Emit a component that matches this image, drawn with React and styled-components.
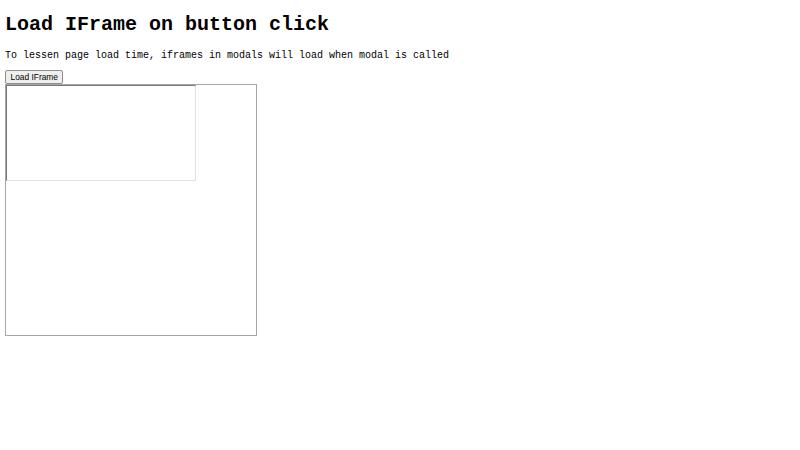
import styled, { createGlobalStyle } from "styled-components";

const GlobalStyle = createGlobalStyle`
  body {
    margin: 0;
    background: #fff;
  }
`;

const Page = styled.div`
  padding: 13px 5px;
  font-family: "Liberation Mono", "DejaVu Sans Mono", monospace;
  color: #000;
`;

const Title = styled.h1`
  margin: 0 0 14px;
  font-size: 20px;
  line-height: 23px;
  font-weight: bold;
`;

const Intro = styled.p`
  margin: 0 0 8px;
  font-size: 10px;
  line-height: 12px;
`;

const LoadButton = styled.button`
  display: block;
  box-sizing: border-box;
  height: 14px;
  padding: 0 4.5px;
  font-family: "Liberation Sans", Arial, sans-serif;
  font-size: 8.4px;
  line-height: 12px;
  color: #000;
  background: #efefef;
  border: 1px solid #8f8f8f;
  border-radius: 2px;
`;

const Holder = styled.div`
  box-sizing: border-box;
  width: 252px;
  height: 252px;
  border: 1px solid #a6a6a6;
`;

const Frame = styled.iframe`
  display: block;
  box-sizing: border-box;
  width: 190px;
  height: 96px;
  border-style: solid;
  border-width: 1px;
  border-color: #7a7a7a #e2e2e2 #e2e2e2 #7a7a7a;
  background: #fff;
`;

export default function App() {
  return (
    <>
      <GlobalStyle />
      <Page>
        <Title>Load IFrame on button click</Title>
        <Intro>
          To lessen page load time, iframes in modals will load when modal is
          called
        </Intro>
        <LoadButton>Load IFrame</LoadButton>
        <Holder>
          <Frame title="modal-frame" />
        </Holder>
      </Page>
    </>
  );
}
